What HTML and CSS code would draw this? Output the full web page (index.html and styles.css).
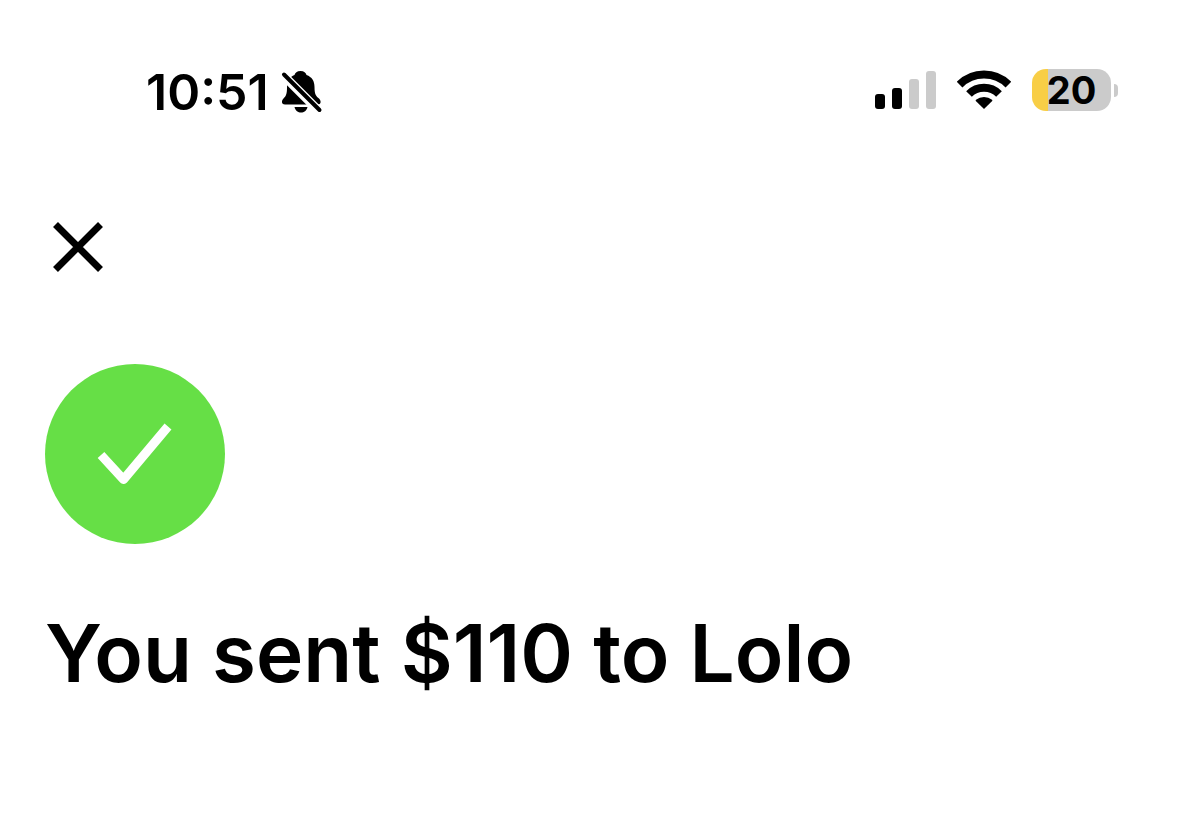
FILE: index.html
```
<!DOCTYPE html>
<html lang="en">
<head>
<meta charset="utf-8">
<meta name="viewport" content="width=device-width, initial-scale=1">
<title>Payment sent</title>
<link rel="stylesheet" href="styles.css">
</head>
<body>
<header class="status-bar">
  <div class="status-group">
    <time class="clock">10:51</time>
    <svg class="bell" viewBox="0 0 44 44" role="img" aria-label="Silent mode">
      <path d="M20.5 1C24 1 26 3 26.500 5C32 7 34.500 11 34.500 17C34.500 25 36.500 26.500 39 28.500C41.500 31 41 34.500 38 34.500H5C1.500 34.500 1 31 3.500 28.500C6 26 7 24 7 18C7 11 10 6.500 14.500 5C15 3 17 1 20.500 1Z"/>
      <path d="M14.500 37H27.500C26.500 41 24 42.500 21 42.500C18 42.500 15.500 41 14.500 37Z"/>
      <path class="bell-gap" d="M0 2L41 43"/>
      <path class="bell-slash" d="M4 4.500L39.500 40"/>
    </svg>
  </div>
  <div class="status-group status-icons">
    <svg class="signal" viewBox="0 0 61 40" role="img" aria-label="Signal: two of four bars">
      <rect x="0" y="24" width="10" height="15" rx="3"/>
      <rect x="17" y="18" width="10" height="21" rx="3"/>
      <rect class="off" x="34" y="9" width="10" height="30" rx="3"/>
      <rect class="off" x="51" y="1" width="10" height="38" rx="3"/>
    </svg>
    <svg class="wifi" viewBox="0 0 54 40" role="img" aria-label="Wi-Fi">
      <path class="arc" d="M2.600 14.600A34.500 34.500 0 0 1 51.400 14.600"/>
      <path class="arc" d="M12 24A21.200 21.200 0 0 1 42 24"/>
      <path d="M27 39L18.800 31Q18.400 30.300 19 29.800A12.500 12.500 0 0 1 35 29.800Q35.600 30.300 35.200 31Z"/>
    </svg>
    <div class="battery">
      <span class="battery-body">20</span>
      <span class="battery-cap"></span>
    </div>
  </div>
</header>
<main class="receipt">
  <button class="close" type="button" aria-label="Close">
    <svg viewBox="0 0 50 50" aria-hidden="true"><path d="M2.500 2.500L47.500 47.500M47.500 2.500L2.500 47.500"/></svg>
  </button>
  <div class="badge">
    <svg viewBox="0 0 180 180" aria-hidden="true"><path d="M56 91L78.500 115.500L123 62.500"/></svg>
  </div>
  <h1 class="title">You sent $110 to Lolo</h1>
</main>
</body>
</html>
```
FILE: styles.css
```
* { box-sizing: border-box; }
body {
  margin: 0;
  background: #fff;
  color: #000;
  font-family: Inter, "Liberation Sans", sans-serif;
}
svg { display: block; }
.status-bar {
  display: flex;
  justify-content: space-between;
  align-items: flex-start;
  padding: 60px 82px 0 146px;
}
.status-group { display: flex; align-items: center; gap: 11px; }
.clock { font-size: 50px; font-weight: 600; line-height: 64px; }
.bell { width: 44px; height: 44px; }
.bell-gap { stroke: #fff; stroke-width: 9; }
.bell-slash { stroke: #000; stroke-width: 4; stroke-linecap: round; }
.status-icons { gap: 21px; height: 60px; }
.signal { width: 61px; height: 40px; }
.signal .off { fill: #cbcbcb; }
.wifi { width: 54px; height: 40px; }
.wifi .arc { fill: none; stroke: #000; stroke-width: 8; }
.battery { display: flex; align-items: center; gap: 3px; }
.battery-body {
  width: 79px;
  border-radius: 14px;
  background: linear-gradient(to right, #f8ce46 16px, #cbcbcb 16px);
  font-size: 38px;
  font-weight: 700;
  line-height: 42px;
  text-align: center;
}
.battery-cap { width: 4px; height: 13px; border-radius: 0 6px 6px 0; background: #cbcbcb; }
.receipt {
  display: flex;
  flex-direction: column;
  align-items: flex-start;
  padding: 98px 45px 60px;
}
.close { margin: 0 8px; padding: 0; border: 0; background: none; cursor: pointer; }
.close svg { width: 50px; height: 50px; fill: none; stroke: #000; stroke-width: 7; }
.badge { margin-top: 92px; border-radius: 50%; background: #66df46; }
.badge svg { width: 180px; height: 180px; fill: none; stroke: #fff; stroke-width: 9; stroke-linejoin: round; }
.title {
  margin: 53px 0 0;
  font-size: 80px;
  font-weight: 600;
  line-height: 112px;
}
```
